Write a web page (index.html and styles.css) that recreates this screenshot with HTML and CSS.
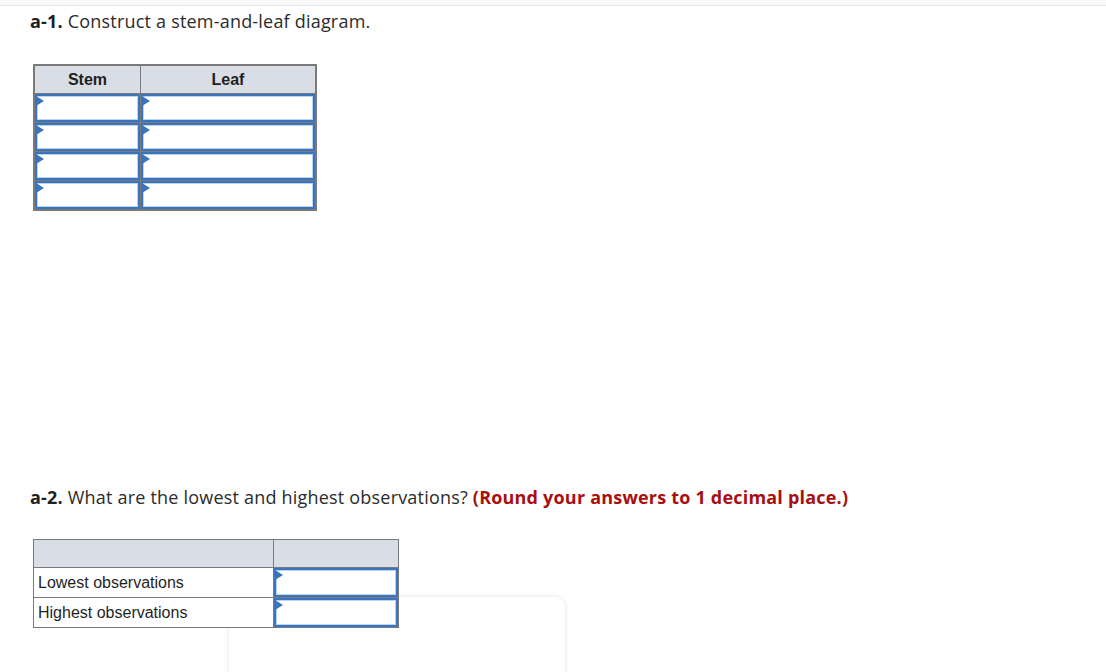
FILE: index.html
```html
<!DOCTYPE html>
<html>
<head>
<meta charset="utf-8">
<link rel="stylesheet" href="styles.css">
</head>
<body>
<div class="topbar"></div>
<div class="content">
  <p class="q q1"><b class="lbl">a-1.</b> Construct a stem-and-leaf diagram.</p>
  <table class="stem">
    <thead>
      <tr><th class="c-stem">Stem</th><th class="c-leaf">Leaf</th></tr>
    </thead>
    <tbody>
      <tr><td><div class="inp"></div></td><td><div class="inp"></div></td></tr>
      <tr><td><div class="inp"></div></td><td><div class="inp"></div></td></tr>
      <tr><td><div class="inp"></div></td><td><div class="inp"></div></td></tr>
      <tr><td><div class="inp"></div></td><td><div class="inp"></div></td></tr>
    </tbody>
  </table>
  <p class="q q2"><b class="lbl">a-2.</b> What are the lowest and highest observations? <b class="red">(Round your answers to 1 decimal place.)</b></p>
  <table class="obs">
    <thead>
      <tr><th class="c-lab"></th><th class="c-val"></th></tr>
    </thead>
    <tbody>
      <tr><td class="lab">Lowest observations</td><td class="val"><div class="inp"></div></td></tr>
      <tr><td class="lab">Highest observations</td><td class="val"><div class="inp"></div></td></tr>
    </tbody>
  </table>
</div>
<div class="popup"></div>
</body>
</html>
```

FILE: styles.css
```css
html, body {
  margin: 0;
  padding: 0;
  background: #ffffff;
}
body {
  width: 1106px;
  height: 672px;
  overflow: hidden;
  position: relative;
  font-family: "Open Sans", "Lato", sans-serif;
  color: #2b2b2b;
}
.topbar {
  height: 5px;
  background: #fafafa;
  border-bottom: 1px solid #e6e6e6;
}
.content {
  padding-left: 30px;
  position: relative;
  z-index: 1;
}
.q {
  margin: 0;
  font-size: 18px;
  letter-spacing: 0.2px;
  line-height: 22px;
  color: #2b2b2b;
}
.q1 {
  padding-top: 4px;
}
.lbl {
  font-weight: 700;
  color: #1f1f1f;
}
.red {
  color: #a80f0f;
  font-weight: 700;
}
table {
  border-collapse: collapse;
  font-family: "Liberation Sans", Arial, sans-serif;
  background: #fff;
}
.stem {
  margin-left: 3px;
  margin-top: 32px;
  border: 2px solid #7a7a7a;
}
th {
  background: #d9dde6;
  border: 1px solid #7a7a7a;
  height: 27px;
  padding: 0;
  font-size: 16px;
  font-weight: 700;
  color: #1f1f1f;
}
.c-stem { width: 105px; }
.c-leaf { width: 174px; }
td {
  padding: 0;
  border: 1px solid #7a7a7a;
  height: 28px;
}
.inp {
  position: relative;
  height: 28px;
  box-sizing: border-box;
  border: 2px solid #3a74bc;
  box-shadow: inset 0 0 0 1px #bcd4f0;
  background: #fff;
}
.inp::before {
  content: "";
  position: absolute;
  left: -1px;
  top: 0;
  border-left: 8px solid #3a74bc;
  border-top: 5px solid transparent;
  border-bottom: 5px solid transparent;
}
.q2 {
  margin-top: 275px;
}
.obs {
  margin-left: 3px;
  margin-top: 31px;
  border: 1px solid #7a7a7a;
}
.c-lab { width: 239px; }
.c-val { width: 124px; }
.lab {
  font-size: 16px;
  color: #1f1f1f;
  padding-left: 4px;
}
.obs td {
  height: 29px;
}
.obs .inp {
  height: 29px;
}
.popup {
  position: absolute;
  left: 229px;
  top: 597px;
  width: 336px;
  height: 120px;
  border-radius: 10px;
  background: #fff;
  box-shadow: 0 0 5px rgba(0, 0, 0, 0.12);
  z-index: 0;
}
```
